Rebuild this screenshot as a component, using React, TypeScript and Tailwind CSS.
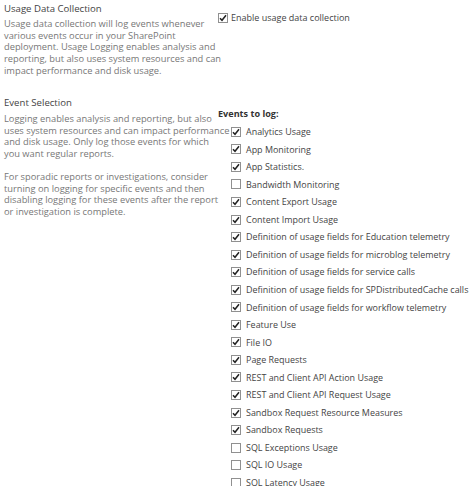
import React from "react";

const items: [string, boolean][] = [
  ["Analytics Usage", true],
  ["App Monitoring", true],
  ["App Statistics.", true],
  ["Bandwidth Monitoring", false],
  ["Content Export Usage", true],
  ["Content Import Usage", true],
  ["Definition of usage fields for Education telemetry", true],
  ["Definition of usage fields for microblog telemetry", true],
  ["Definition of usage fields for service calls", true],
  ["Definition of usage fields for SPDistributedCache calls", true],
  ["Definition of usage fields for workflow telemetry", true],
  ["Feature Use", true],
  ["File IO", true],
  ["Page Requests", true],
  ["REST and Client API Action Usage", true],
  ["REST and Client API Request Usage", true],
  ["Sandbox Request Resource Measures", true],
  ["Sandbox Requests", true],
  ["SQL Exceptions Usage", false],
  ["SQL IO Usage", false],
  ["SQL Latency Usage", false],
];

const p1 = [
  "Usage data collection will log events whenever",
  "various events occur in your SharePoint",
  "deployment. Usage Logging enables analysis and",
  "reporting, but also uses system resources and can",
  "impact performance and disk usage.",
];
const p2 = [
  "Logging enables analysis and reporting, but also",
  "uses system resources and can impact performance",
  "and disk usage. Only log those events for which",
  "you want regular reports.",
];
const p3 = [
  "For sporadic reports or investigations, consider",
  "turning on logging for specific events and then",
  "disabling logging for these events after the report",
  "or investigation is complete.",
];

function Box({ checked }: { checked: boolean }) {
  return (
    <span className="inline-flex h-[10px] w-[10px] shrink-0 items-center justify-center border border-[#909090] bg-white">
      {checked && (
        <svg width="8" height="8" viewBox="0 0 8 8">
          <polyline points="1,4.2 3,6.3 7,1.2" fill="none" stroke="#222" strokeWidth="1.5" />
        </svg>
      )}
    </span>
  );
}

function Para({ lines, className }: { lines: string[]; className: string }) {
  return (
    <div className={`text-[9.3px] leading-[11.7px] text-[#777] ${className}`}>
      {lines.map((l) => (
        <div key={l} className="w-fit whitespace-nowrap">
          {l}
        </div>
      ))}
    </div>
  );
}

export default function App() {
  return (
    <div
      className="h-[486px] w-[474px] overflow-hidden bg-white"
      style={{ fontFamily: '"Segoe UI", "Open Sans", sans-serif' }}
    >
      <div className="grid grid-cols-[218px_1fr]">
        <div className="pl-[4px] pt-[2px]">
          <div className="w-fit text-[9.6px] leading-[14px] text-[#444]">Usage Data Collection</div>
          <Para lines={p1} className="mt-[2px]" />
        </div>
        <div className="pt-[12px]">
          <label className="flex w-fit items-center gap-[3px] text-[9px] leading-[12px] text-[#444]">
            <Box checked={true} />
            <span>Enable usage data collection</span>
          </label>
        </div>
      </div>
      <div className="mt-[19.5px] grid grid-cols-[218px_1fr]">
        <div className="pl-[4px]">
          <div className="w-fit text-[9.6px] leading-[14px] text-[#444]">Event Selection</div>
          <Para lines={p2} className="mt-[3px]" />
          <Para lines={p3} className="mt-[11px]" />
        </div>
        <div className="pt-[11px]">
          <div className="w-fit text-[9.1px] font-bold leading-[14px] text-[#333]">Events to log:</div>
          <div className="mt-[2px] flex flex-col pl-[13px]">
            {items.map(([label, checked]) => (
              <label
                key={label}
                className="flex h-[17.55px] w-fit items-center gap-[5px] text-[8.95px] text-[#444]"
              >
                <Box checked={checked} />
                <span className="whitespace-nowrap">{label}</span>
              </label>
            ))}
          </div>
        </div>
      </div>
    </div>
  );
}
